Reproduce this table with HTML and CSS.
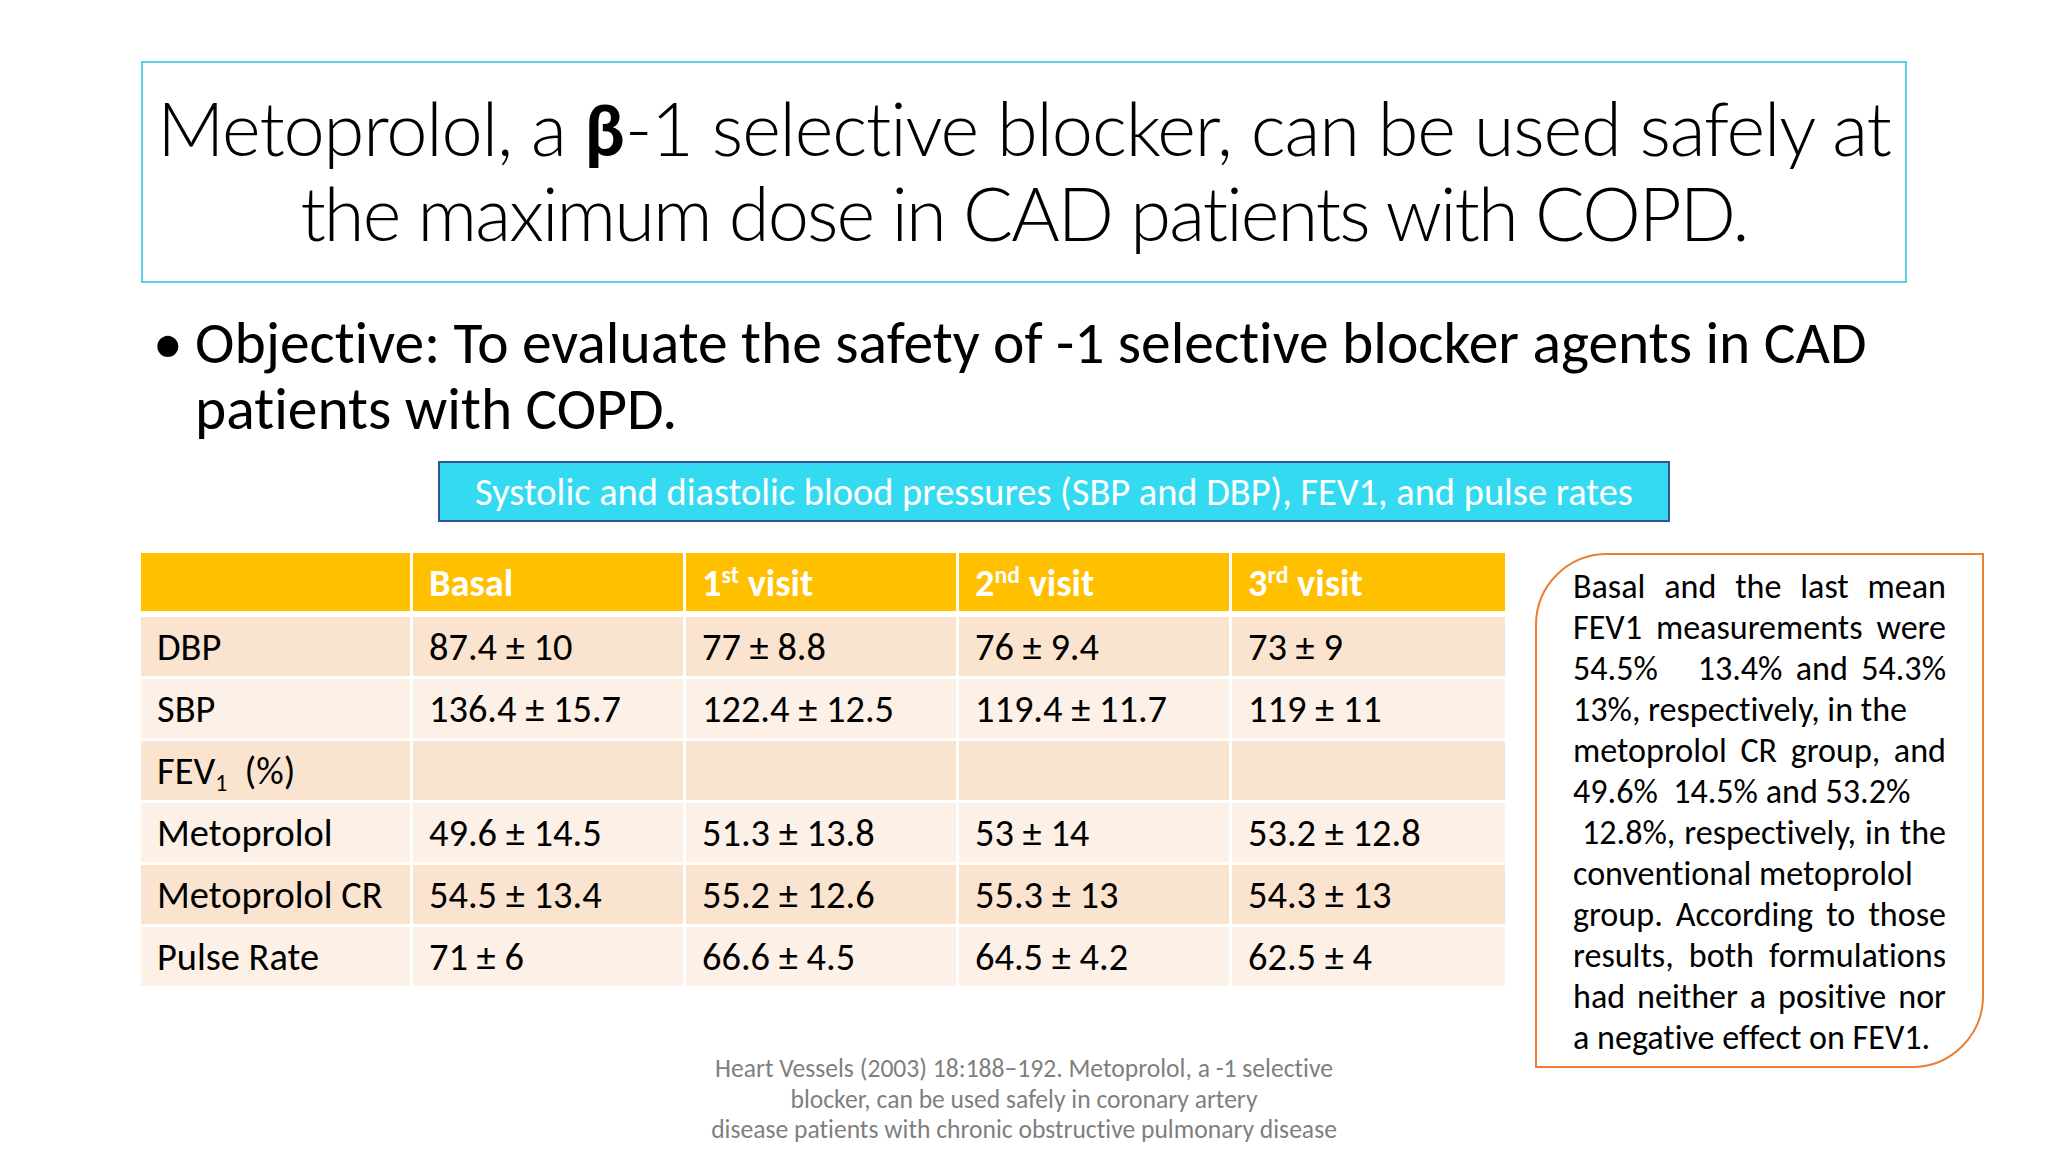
FILE: index.html
```html
<!DOCTYPE html>
<html lang="en">
<head>
<meta charset="utf-8">
<title>Metoprolol in CAD patients with COPD</title>
<link rel="stylesheet" href="styles.css">
</head>
<body>
<div class="slide">
  <header class="title-box">
    <h1 class="title"><span class="l1">Metoprolol, a <b class="beta">β</b>-1 selective blocker, can be used safely at</span><br><span class="l2">the maximum dose in CAD patients with COPD.</span></h1>
  </header>

  <ul class="objective">
    <li>Objective: To evaluate the safety of -1 selective blocker agents in CAD patients with COPD.</li>
  </ul>

  <div class="caption">Systolic and diastolic blood pressures (SBP and DBP), FEV1, and pulse rates</div>

  <div class="main">
    <table class="data">
      <thead>
        <tr>
          <th></th>
          <th>Basal</th>
          <th>1<sup>st</sup> visit</th>
          <th>2<sup>nd</sup> visit</th>
          <th>3<sup>rd</sup> visit</th>
        </tr>
      </thead>
      <tbody>
        <tr class="band"><td>DBP</td><td>87.4 ± 10</td><td>77 ± 8.8</td><td>76 ± 9.4</td><td>73 ± 9</td></tr>
        <tr><td>SBP</td><td>136.4 ± 15.7</td><td>122.4 ± 12.5</td><td>119.4 ± 11.7</td><td>119 ± 11</td></tr>
        <tr class="band"><td>FEV<sub>1</sub>&nbsp; (%)</td><td></td><td></td><td></td><td></td></tr>
        <tr><td>Metoprolol</td><td>49.6 ± 14.5</td><td>51.3 ± 13.8</td><td>53 ± 14</td><td>53.2 ± 12.8</td></tr>
        <tr class="band"><td>Metoprolol CR</td><td>54.5 ± 13.4</td><td>55.2 ± 12.6</td><td>55.3 ± 13</td><td>54.3 ± 13</td></tr>
        <tr><td>Pulse Rate</td><td>71 ± 6</td><td>66.6 ± 4.5</td><td>64.5 ± 4.2</td><td>62.5 ± 4</td></tr>
      </tbody>
    </table>

    <div class="note">
      <div class="ln j">Basal and the last mean</div>
      <div class="ln j">FEV1 measurements were</div>
      <div class="ln j">54.5%&nbsp; &nbsp;13.4% and 54.3%</div>
      <div class="ln">13%, respectively, in the</div>
      <div class="ln j">metoprolol CR group, and</div>
      <div class="ln">49.6%&nbsp; 14.5% and 53.2%</div>
      <div class="ln j">&nbsp;12.8%, respectively, in the</div>
      <div class="ln">conventional metoprolol</div>
      <div class="ln j">group. According to those</div>
      <div class="ln j">results, both formulations</div>
      <div class="ln j">had neither a positive nor</div>
      <div class="ln">a negative effect on FEV1.</div>
    </div>

    <p class="ref">Heart Vessels (2003) 18:188–192. Metoprolol, a -1 selective<br>blocker, can be used safely in coronary artery<br>disease patients with chronic obstructive pulmonary disease</p>
  </div>
</div>
</body>
</html>
```

FILE: styles.css
```css
html, body {
  margin: 0;
  padding: 0;
  background: #ffffff;
}

.slide {
  width: 2048px;
  height: 1152px;
  overflow: hidden;
  background: #ffffff;
  padding-top: 61px;
  box-sizing: border-box;
  font-family: Carlito, Calibri, "Lato", "Open Sans", sans-serif;
  font-variant-ligatures: none;
  color: #000000;
}

.title-box {
  margin-left: 141px;
  width: 1766px;
  height: 222px;
  box-sizing: border-box;
  border: 2px solid #5ccfe6;
  padding-top: 24px;
}

.title {
  margin: 0;
  font-family: "Lato", Carlito, sans-serif;
  font-weight: 300;
  font-size: 74px;
  line-height: 82px;
  text-align: center;
  white-space: nowrap;
}

.title .l1 {
  letter-spacing: -1.15px;
}

.title .l2 {
  letter-spacing: -1.9px;
}

.beta {
  font-family: Carlito, "Lato", sans-serif;
  font-weight: 700;
  letter-spacing: 0;
}

.objective {
  margin: 27px 0 0 0;
  padding: 0 0 0 195px;
  list-style: none;
  width: 1730px;
  font-size: 59.5px;
  line-height: 65.5px;
}

.objective li {
  position: relative;
}

.objective li::before {
  content: "•";
  position: absolute;
  left: -42px;
}

.caption {
  margin: 20px 0 0 438px;
  width: 1232px;
  height: 61px;
  box-sizing: border-box;
  border: 2px solid #2f5597;
  background: #34daf1;
  color: #ffffff;
  font-size: 38.4px;
  line-height: 57px;
  text-align: center;
}

.main {
  margin: 31px 0 0 141px;
  display: grid;
  grid-template-columns: 1364px 449px;
  column-gap: 30px;
  align-items: start;
}

.data {
  grid-column: 1;
  grid-row: 1;
  width: 1364px;
  border-collapse: separate;
  border-spacing: 0;
  table-layout: fixed;
  font-size: 38.4px;
}

.data th,
.data td {
  box-sizing: border-box;
  padding: 0 0 0 16px;
  text-align: left;
  vertical-align: middle;
  white-space: nowrap;
  border-right: 3px solid #ffffff;
}

.data th:last-child,
.data td:last-child {
  border-right: 0;
}

.data th {
  height: 64px;
  background: #ffc000;
  color: #ffffff;
  font-weight: 700;
  border-bottom: 6px solid #ffffff;
}

.data th:first-child,
.data td:first-child {
  width: 272px;
}

.data td {
  height: 62px;
  background: #fdf1e7;
  border-bottom: 3px solid #ffffff;
}

.data tr.band td {
  background: #fbe4cf;
}

.data sup {
  font-size: 0.62em;
  vertical-align: 0.55em;
  line-height: 0;
}

.data sub {
  font-size: 0.62em;
  vertical-align: -0.3em;
  line-height: 0;
}

.note {
  grid-column: 2;
  grid-row: 1 / 3;
  width: 449px;
  height: 515px;
  box-sizing: border-box;
  border: 2px solid #ed7d31;
  border-radius: 72px 0 72px 0;
  padding: 11px 36px 0 36px;
  font-size: 34.1px;
  line-height: 41px;
}

.ln {
  white-space: nowrap;
  text-align: left;
}

.ln.j {
  text-align: justify;
  text-align-last: justify;
  white-space: normal;
}

.ref {
  grid-column: 1 / 3;
  grid-row: 2;
  margin: 65px 0 0 0;
  padding-right: 77px;
  text-align: center;
  color: #7f7f7f;
  font-size: 25.6px;
  line-height: 30.5px;
}
```
